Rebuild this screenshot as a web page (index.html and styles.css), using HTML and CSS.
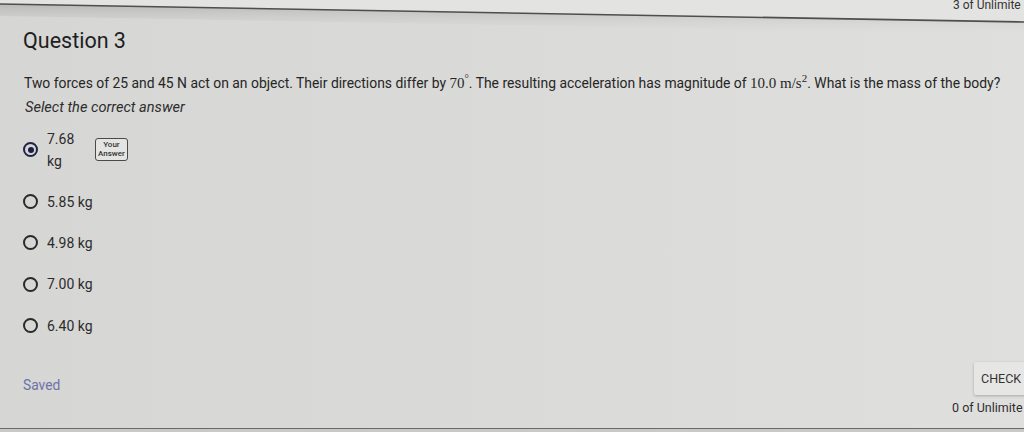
FILE: index.html
```html
<!DOCTYPE html>
<html>
<head>
<meta charset="utf-8">
<link rel="stylesheet" href="styles.css">
</head>
<body>
<div class="page">
  <div class="topband">
    <svg class="topline" width="1024" height="32" viewBox="0 0 1024 32">
      <defs>
        <linearGradient id="sh" x1="0" y1="0" x2="0" y2="1">
          <stop offset="0" stop-color="#b9b9b7"/>
          <stop offset="1" stop-color="#d7d7d5" stop-opacity="0"/>
        </linearGradient>
      </defs>
      <polygon points="0,0 1024,0 1024,22 0,4" fill="#e3e3e1"/>
      <polygon points="0,4 1024,22 1024,34 0,16" fill="url(#sh)"/>
      <line x1="0" y1="4" x2="1024" y2="22" stroke="#4e4e4e" stroke-width="1.6"/>
    </svg>
    <span class="attempts">3 of Unlimite</span>
  </div>

  <h1 class="qtitle">Question 3</h1>
  <p class="qtext">Two forces of 25 and 45 N act on an object. Their directions differ by <span class="math">70<sup>°</sup></span>. The resulting acceleration has magnitude of <span class="math">10.0 m/s<sup>2</sup></span>. What is the mass of the body?</p>
  <p class="hint">Select the correct answer</p>

  <div class="options">
    <div class="opt opt-selected">
      <span class="radio checked"></span>
      <span class="lbl two">7.68<br>kg</span>
      <span class="badge">Your<br>Answer</span>
    </div>
    <div class="opt"><span class="radio"></span><span class="lbl">5.85 kg</span></div>
    <div class="opt"><span class="radio"></span><span class="lbl">4.98 kg</span></div>
    <div class="opt"><span class="radio"></span><span class="lbl">7.00 kg</span></div>
    <div class="opt"><span class="radio"></span><span class="lbl">6.40 kg</span></div>
  </div>

  <div class="footer">
    <span class="saved">Saved</span>
    <div class="checkcol">
      <button class="check">CHECK</button>
      <span class="attempts2">0 of Unlimite</span>
    </div>
  </div>
  <div class="bottomline"></div>
</div>
</body>
</html>
```

FILE: styles.css
```css
html, body {
  margin: 0;
  padding: 0;
}
body {
  width: 1024px;
  height: 432px;
  overflow: hidden;
  background: linear-gradient(90deg, #d6d6d4 0%, #dadad8 50%, #dfdfdd 100%);
  font-family: Roboto, "Liberation Sans", sans-serif;
  color: #2a2a2a;
}
.page {
  position: relative;
  width: 1024px;
  height: 432px;
  display: flex;
  flex-direction: column;
  overflow: hidden;
}
.topband {
  position: relative;
  height: 26px;
}
.topline {
  display: block;
}
.attempts {
  position: absolute;
  top: -2px;
  left: 953px;
  font-size: 12px;
  color: #333;
  white-space: nowrap;
}
.qtitle {
  margin: 2px 0 0 23px;
  font-size: 21.5px;
  font-weight: 400;
  color: #1e1e1e;
  line-height: 26px;
}
.qtext {
  margin: 19px 0 0 24px;
  font-size: 13.9px;
  line-height: 20px;
  color: #262626;
  white-space: nowrap;
}
.math {
  font-family: "Liberation Serif", "DejaVu Serif", serif;
  font-size: 15px;
}
.math sup {
  font-size: 11px;
  line-height: 0;
}
.hint {
  margin: 4px 0 0 25px;
  font-size: 14.6px;
  font-style: italic;
  line-height: 20px;
  color: #2e2e2e;
}
.options {
  display: flex;
  flex-direction: column;
  margin: 6px 0 0 23px;
}
.opt {
  display: flex;
  align-items: center;
  height: 41.3px;
  font-size: 14px;
  color: #2c2c2c;
}
.opt-selected {
  height: 53px;
  margin-bottom: 5px;
}
.radio {
  width: 11px;
  height: 11px;
  border: 2px solid #2a2a2a;
  border-radius: 50%;
  margin-right: 9px;
  flex: none;
  box-sizing: content-box;
  position: relative;
}
.radio.checked {
  border-color: #1f2347;
}
.radio.checked::after {
  content: "";
  position: absolute;
  left: 2.5px;
  top: 2.5px;
  width: 6px;
  height: 6px;
  border-radius: 50%;
  background: #1a1e45;
}
.lbl.two {
  line-height: 22px;
  margin-left: 0;
  width: 28px;
}
.badge {
  display: inline-block;
  margin-left: 20px;
  margin-top: 0;
  border: 1px solid #4a4a4a;
  border-radius: 3px;
  padding: 2px 2px;
  font-size: 8px;
  font-weight: 500;
  line-height: 8.5px;
  text-align: center;
  color: #333;
  background: #e4e4e2;
}
.footer {
  display: flex;
  justify-content: space-between;
  align-items: flex-start;
  margin-top: 16px;
}
.saved {
  margin: 15px 0 0 23px;
  font-size: 13.8px;
  color: #6d72a8;
}
.checkcol {
  display: flex;
  flex-direction: column;
  align-items: flex-start;
  width: 72px;
}
.check {
  margin-left: 22px;
  width: 64px;
  height: 33px;
  flex: none;
  border: none;
  border-radius: 2px;
  background: #e6e6e4;
  box-shadow: 0 1px 3px rgba(0,0,0,0.25);
  font-family: Roboto, "Liberation Sans", sans-serif;
  font-size: 12.5px;
  color: #333;
  text-align: left;
  padding: 0 0 0 7px;
}
.attempts2 {
  margin-top: 5px;
  font-size: 12.5px;
  color: #2e2e2e;
  white-space: nowrap;
}
.bottomline {
  position: absolute;
  left: 0;
  right: 0;
  top: 428px;
  height: 4px;
  border-top: 1px solid #6a6a6a;
  background: #c9c9c7;
}
```
